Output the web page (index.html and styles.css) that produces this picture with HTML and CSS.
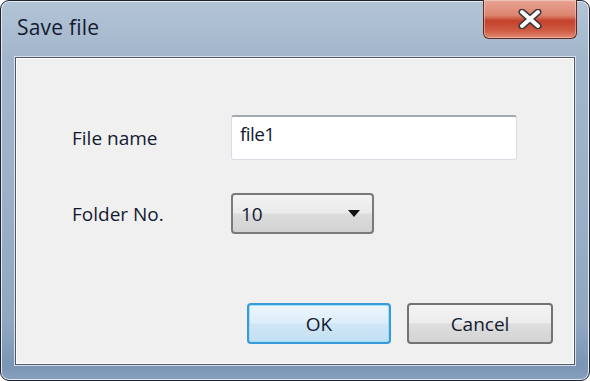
FILE: index.html
```html
<!DOCTYPE html>
<html>
<head>
    <title>Save file</title>
    <link rel="stylesheet" href="styles.css">
</head>
<body>
    <div class="window">
        <div class="titlebar">
            <span class="title">Save file</span>
            <button class="close">
                <svg width="26" height="20" viewBox="0 0 26 20">
                    <path d="M5 3 L21 17 M21 3 L5 17" stroke="#3a3a3a" stroke-width="7" stroke-linecap="round"/>
                    <path d="M5 3 L21 17 M21 3 L5 17" stroke="#ffffff" stroke-width="4" stroke-linecap="round"/>
                </svg>
            </button>
        </div>
        <div class="client">
            <div class="form">
                <label>File name</label>
                <div class="textbox">file1</div>
                <label>Folder No.</label>
                <div class="combo">
                    <span>10</span>
                    <span class="arrow"></span>
                </div>
            </div>
            <div class="buttons">
                <button class="btn default">OK</button>
                <button class="btn">Cancel</button>
            </div>
        </div>
    </div>
</body>
</html>
```

FILE: styles.css
```css
body { margin: 0; background: #ffffff; font-family: "Open Sans", sans-serif; }
.window { width: 590px; height: 381px; box-sizing: border-box; border: 1px solid #1f2330; border-radius: 9px; padding: 0 14px 15px 14px; display: flex; flex-direction: column; background: linear-gradient(180deg, #b3c4d6 0%, #a2b6cb 15%, #9cb1c8 50%, #90a7c1 85%, #7a95b4 96%, #86a0bd 100%); box-shadow: inset 0 0 0 1px #e3ebf3; }
.titlebar { height: 56px; display: flex; align-items: flex-start; position: relative; }
.title { font-size: 21px; color: #141a30; margin: 12px 0 0 2px; letter-spacing: 0.2px; }
.close { position: absolute; right: -2px; top: -1px; width: 94px; height: 39px; border: 1px solid #5e2a22; border-top: none; border-radius: 0 0 6px 6px; background: linear-gradient(180deg, #e9a495 0%, #dc8570 40%, #c4412b 55%, #cf5b43 80%, #e08b72 100%); display: flex; align-items: center; justify-content: center; padding: 0; box-shadow: inset 0 0 0 1px rgba(255,255,255,0.35); }
.client { flex: 1; background: #f0f0f0; border: 1px solid #4f5864; box-shadow: 0 0 0 1px #d6e1ec, inset 0 0 0 1px #ffffff; display: flex; flex-direction: column; padding: 57px 21px 20px 56px; }
.form { display: grid; grid-template-columns: 159px 286px; grid-template-rows: 45px 41px; row-gap: 33px; align-items: center; }
label { font-size: 19px; color: #141a30; }
.textbox { height: 45px; box-sizing: border-box; background: #fff; border: 1px solid #d8dde6; border-top: 2px solid #a4a8b0; border-radius: 3px; font-size: 19px; color: #141a30; padding: 4px 8px; letter-spacing: -0.6px; }
.combo { width: 143px; height: 41px; box-sizing: border-box; border: 2px solid #7a7a7a; border-radius: 4px; background: linear-gradient(180deg, #f3f3f3 0%, #ebebeb 48%, #dcdcdc 52%, #d2d2d2 100%); display: flex; align-items: center; justify-content: space-between; padding: 0 12px 0 8px; font-size: 19px; color: #141a30; }
.arrow { width: 0; height: 0; border-left: 6px solid transparent; border-right: 6px solid transparent; border-top: 7px solid #111; }
.buttons { margin-top: auto; display: flex; justify-content: flex-end; gap: 16px; }
.btn { width: 146px; height: 41px; font-family: "Open Sans", sans-serif; font-size: 19px; color: #141a30; border: 2px solid #737373; border-radius: 4px; background: linear-gradient(180deg, #f4f4f4 0%, #ececec 48%, #dedede 52%, #d3d3d3 100%); }
.btn.default { width: 144px; border-color: #3a9ad8; background: linear-gradient(180deg, #ecf6fd 0%, #dceefa 48%, #cfe6f6 52%, #c3dff2 100%); box-shadow: inset 0 0 0 1px #9ee0fb; }
```
